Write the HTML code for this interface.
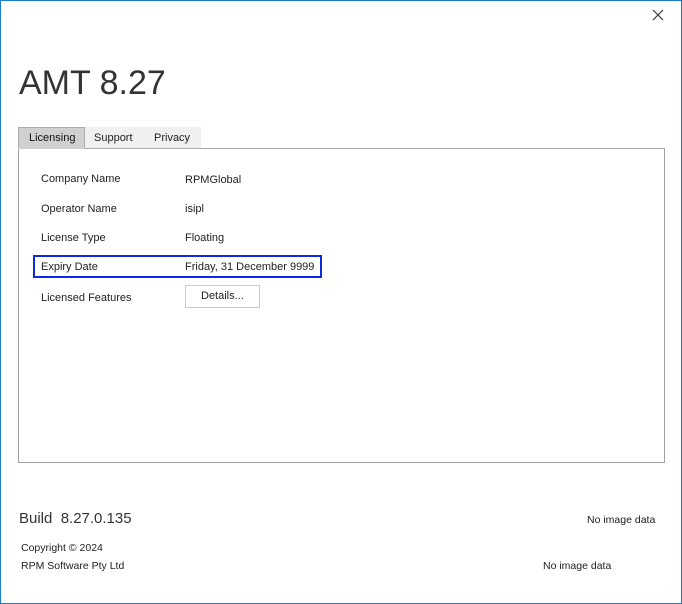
<!DOCTYPE html>
<html><head><style>
*{margin:0;padding:0;box-sizing:border-box}
body{width:682px;height:604px;background:#fff;font-family:"Liberation Sans",sans-serif;position:relative;overflow:hidden;color:#222}
.win{position:absolute;left:0;top:0;width:682px;height:604px;border:1px solid #1979ca}
.a{position:absolute;white-space:nowrap}
.t{font-size:11px}
</style></head><body>
<div class="win"></div>
<svg class="a" style="left:652px;top:9px" width="12" height="12"><path d="M1 1L11 11M11 1L1 11" stroke="#333" stroke-width="1.2"/></svg>
<div class="a" style="left:19px;top:64px;font-size:34px;color:#333">AMT 8.27</div>
<div class="a" style="left:18px;top:127px;width:183px;height:21px;background:#f0f0f0"></div>
<div class="a" style="left:18px;top:127px;width:67px;height:22px;background:#d0d0d0;border:1px solid #adadad;border-bottom:none"></div>
<div class="a t" style="left:29px;top:132px;color:#111">Licensing</div>
<div class="a t" style="left:94px;top:132px">Support</div>
<div class="a t" style="left:154px;top:132px">Privacy</div>
<div class="a" style="left:18px;top:148px;width:647px;height:315px;border:1px solid #a0a0a0;border-top-color:#adadad"></div>
<div class="a" style="left:18px;top:148px;width:67px;height:1px;background:#d0d0d0"></div>
<div class="a t" style="left:41px;top:173px">Company Name</div>
<div class="a t" style="left:185px;top:174px">RPMGlobal</div>
<div class="a t" style="left:41px;top:203px">Operator Name</div>
<div class="a t" style="left:185px;top:203px">isipl</div>
<div class="a t" style="left:41px;top:232px">License Type</div>
<div class="a t" style="left:185px;top:232px">Floating</div>
<div class="a" style="left:33px;top:255px;width:289px;height:23px;border:2px solid #0a2be0"></div>
<div class="a t" style="left:41px;top:261px">Expiry Date</div>
<div class="a t" style="left:185px;top:261px">Friday, 31 December 9999</div>
<div class="a t" style="left:41px;top:292px">Licensed Features</div>
<div class="a" style="left:185px;top:285px;width:75px;height:23px;border:1px solid #ccc;background:#fff"></div>
<div class="a t" style="left:201px;top:290px">Details...</div>
<div class="a" style="left:19px;top:510px;font-size:15px;color:#333">Build&nbsp; 8.27.0.135</div>
<div class="a" style="left:587px;top:514px;font-size:10.5px">No image data</div>
<div class="a" style="left:21px;top:542px;font-size:10.5px">Copyright © 2024</div>
<div class="a" style="left:21px;top:560px;font-size:10.5px">RPM Software Pty Ltd</div>
<div class="a" style="left:543px;top:560px;font-size:10.5px">No image data</div>
</body></html>
